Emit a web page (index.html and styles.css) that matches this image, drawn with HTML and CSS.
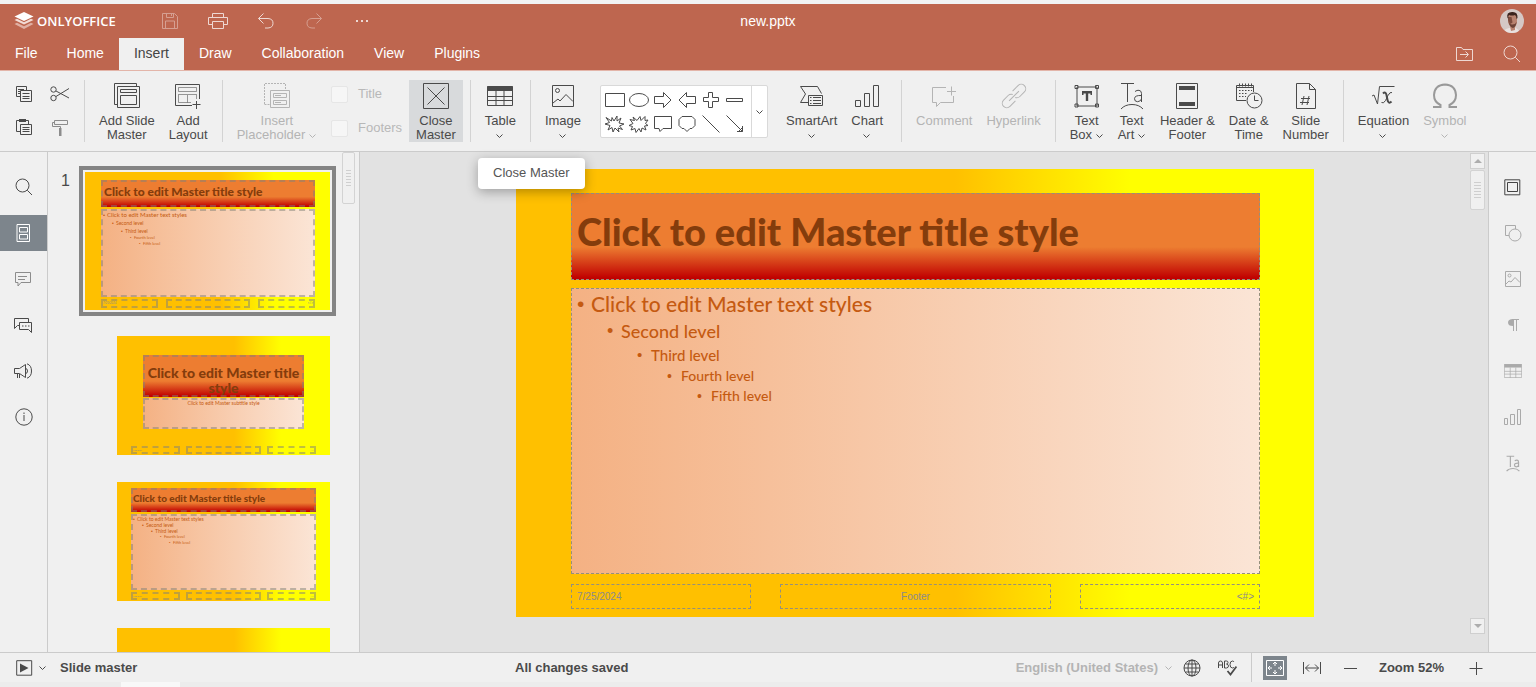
FILE: index.html
```html
<!DOCTYPE html>
<html lang="en">
<head>
<meta charset="utf-8">
<title>new.pptx - ONLYOFFICE</title>
<link rel="stylesheet" href="styles.css">
</head>
<body>
<svg class="sprite" aria-hidden="true">
  <symbol id="chev" viewBox="0 0 9 6"><path d="M1.5 1.5l3 3 3-3"/></symbol>
  <symbol id="search" viewBox="0 0 18 18"><circle cx="7.5" cy="7.5" r="6.5"/><path d="M12.3 12.3l4.7 4.7"/></symbol>
  <symbol id="picture" viewBox="0 0 24 24"><path d="M1.500 1.500h21v21h-21zM2 19l5-4 2 2 6-6.500 7 7"/><circle cx="6.500" cy="6.500" r="2"/></symbol>
  <symbol id="bars" viewBox="0 0 26 24"><path d="M1.500 16.500h5v6h-5zM10.500 9.500h5v13h-5zM19.500 1.500h5v21h-5z"/></symbol>
  <symbol id="grid" viewBox="0 0 26 20"><path d="M.5.500h25v19h-25zM.5 10.500h25M.5 14.500h25M9 5v15M17 5v15"/><path class="solid" d="M.5 0h25v5h-25z"/></symbol>
  <symbol id="textart" viewBox="0 0 24 28"><path d="M1 1.500h13M7.500 1.500V20M15 9.500q2-1.500 4-1.200 2.500.4 2.500 3.200V20M21.500 13.500q-7-.3-7 3.200 0 3 3 3 2.700 0 4-2.700M1 27q4-4.500 11-4.500T23 27"/></symbol>
</svg>

<header class="header">
  <div class="titlebar">
    <a class="logo" href="#">
      <svg width="20" height="18" viewBox="0 0 20 18"><path fill="#fff" d="M10 0l9.500 4.500L10 9 .5 4.500z"/><path fill="#f3dcd6" d="M.5 8l2.500-1.200L10 10.200l7-3.400L19.500 8 10 12.600z"/><path fill="#e0b0a4" d="M.5 12L3 10.800l7 3.400 7-3.400 2.500 1.200L10 17z"/></svg>
      <span>ONLYOFFICE</span>
    </a>
    <div class="quick">
      <button type="button" class="dim" aria-label="Save"><svg width="16" height="16"><path d="M.5.500h12l3 3v12H.500zM4.500.500v4h7v-4M3.500 15v-7h9v7M9.500 1v2"/></svg></button>
      <button type="button" aria-label="Print"><svg width="20" height="16"><path d="M4.500 4V.500h11V4M4 11.500H.500v-7h19v7H16M4.500 8.500h11v7h-11z"/></svg></button>
      <button type="button" aria-label="Undo"><svg width="16" height="16"><path d="M5.500.500l-5 5 5 5M.5 5.500h9.500q5 .3 5 4.700 0 4.500-5 4.800H7"/></svg></button>
      <button type="button" class="dim" aria-label="Redo"><svg width="16" height="16"><path d="M10.500.500l5 5-5 5M15.500 5.500H6q-5 .3-5 4.700Q1 14.700 6 15h3"/></svg></button>
      <button type="button" aria-label="More"><svg width="14" height="4"><path class="dots" d="M1 1h2v2H1zM6 1h2v2H6zM11 1h2v2h-2z"/></svg></button>
    </div>
    <span class="doc-name">new.pptx</span>
    <button type="button" class="avatar" aria-label="User">
      <svg width="24" height="24" viewBox="0 0 24 24"><defs><clipPath id="av"><circle cx="12" cy="12" r="12"/></clipPath></defs><g clip-path="url(#av)"><path fill="#d5c8c5" d="M0 0h24v24H0z"/><path fill="#e9e1df" d="M3 24q1-4 6-5l5-1q5 2 6 6z"/><path fill="#b98370" d="M8 8q0-4 4-4t5 4v6q-1 3-2 4v3l-4 1-1-5q-1.500-2-2-4z"/><path fill="#6b4236" d="M8.500 13q2 3 4 2.500 3 0 4-2.500-.5 5-3.500 6-3.500-1-4.500-6z"/><path fill="#7d4c3e" d="M8 8h3.500l1 5.500-2 1.500q-2.500-2-2.500-4z"/><path fill="#3b231d" d="M7.500 9Q6 3 12 3q6-.5 5.500 6l-1 1q0-3-1.500-4-3 1-6 0-1 1-.8 3.500z"/></g></svg>
    </button>
  </div>
  <nav class="tabs">
    <a href="#">File</a><a href="#">Home</a><a href="#" class="active">Insert</a><a href="#">Draw</a><a href="#">Collaboration</a><a href="#">View</a><a href="#">Plugins</a>
    <div class="tab-tools">
      <button type="button" aria-label="Open file location"><svg width="17" height="14"><path d="M.5.500h5l1.500 2h9.500v11H.500zM4 7.500h8M9.500 4.500l3 3-3 3"/></svg></button>
      <button type="button" aria-label="Find"><svg width="18" height="18"><use href="#search"/></svg></button>
    </div>
  </nav>
</header>

<div class="toolbar">
  <div class="clip">
    <button type="button" aria-label="Copy"><svg width="17" height="17"><path d="M4 10.500H.500V.500h10V4M2 3.500h6M2 5.500h2M2 7.500h2M4.500 4.500h11v11h-11zM6.500 7.500h7M6.500 10.500h7M6.500 12.500h7"/></svg></button>
    <button type="button" aria-label="Cut"><svg width="20" height="16"><circle cx="3.500" cy="3.500" r="2.700"/><circle cx="3.500" cy="12" r="2.700"/><path d="M6 5l13 7M6 10.500L19 2.500"/></svg></button>
    <button type="button" aria-label="Paste"><svg width="17" height="17"><path d="M4 12.500H.500v-11h12V5M4.500 5.500h11v10h-11zM6.500 8.500h7M6.500 10.500h7M6.500 12.500h7"/><path class="solid" d="M3 0h7v3H3z"/></svg></button>
    <button type="button" class="half" aria-label="Copy style"><svg width="16" height="17"><path d="M2.500 1.500h13v4h-13zM2.500 3.500h-2v4h8V10"/><path class="solid" d="M7 9h2.500v8H7z"/></svg></button>
  </div>
  <span class="sep"></span>
  <button type="button" class="tool"><span class="ico"><svg width="26" height="26"><path d="M3.500 21.500h-3V.500h22v3M3.500 3.500h22v21h-22zM6.500 6.500h16v3h-16zM6.500 12.500h16v9h-16z"/></svg></span><span>Add Slide<br>Master</span></button>
  <button type="button" class="tool"><span class="ico"><svg width="26" height="26"><path d="M17 22.500H.500v-21h24V16M21.500 18v8M17.500 21.500h8"/><path class="soft" d="M3.500 4.500h18v4h-18zM3 11.500h19M3.500 12v7.500H16M12.500 12v7.500M21.500 12v4"/></svg></span><span>Add<br>Layout</span></button>
  <span class="sep"></span>
  <button type="button" class="tool off" disabled><span class="ico"><svg width="26" height="26"><path stroke-dasharray="2 1" d="M.5 21V.500h21V6M.5 21.500H6"/><path d="M6.500 7.500h19v17h-19zM9.500 10.500h13v4h-13zM9.500 17.500h13v4h-13zM11 12.500h6M11 19.500h6"/></svg></span><span>Insert<br>Placeholder <svg class="chev"><use href="#chev"/></svg></span></button>
  <div class="checks">
    <label><input type="checkbox" disabled>Title</label>
    <label><input type="checkbox" disabled>Footers</label>
  </div>
  <div class="tip-host">
    <button type="button" class="tool pressed"><span class="ico"><svg width="26" height="26"><path d="M.5.500h25v25H.500zM4.500 4.500l17 17M21.500 4.500l-17 17"/></svg></span><span>Close<br>Master</span></button>
    <div class="tooltip" role="tooltip">Close Master</div>
  </div>
  <span class="sep"></span>
  <button type="button" class="tool"><span class="ico"><svg width="26" height="20"><use href="#grid"/></svg></span><span>Table<br><svg class="chev"><use href="#chev"/></svg></span></button>
  <span class="sep"></span>
  <button type="button" class="tool"><span class="ico"><svg width="24" height="24"><use href="#picture"/></svg></span><span>Image<br><svg class="chev"><use href="#chev"/></svg></span></button>
  <div class="gallery">
    <div class="shapes">
      <button type="button" aria-label="Rectangle"><svg width="20" height="16"><path d="M.5 1.500h19v13H.500z"/></svg></button>
      <button type="button" aria-label="Ellipse"><svg width="20" height="16"><ellipse cx="10" cy="8" rx="9.500" ry="6.500"/></svg></button>
      <button type="button" aria-label="Right arrow"><svg width="20" height="18"><path d="M1.500 5.500h9v-4L18 9l-7.500 7.500v-4h-9z"/></svg></button>
      <button type="button" aria-label="Left arrow"><svg width="20" height="18"><path d="M18.500 5.500h-9v-4L2 9l7.500 7.500v-4h9z"/></svg></button>
      <button type="button" aria-label="Plus"><svg width="18" height="18"><path d="M6.500 1.500h4v5h6v4h-6v6h-4v-6h-5v-4h5z"/></svg></button>
      <button type="button" aria-label="Minus"><svg width="18" height="6"><path d="M.5 1.500h16v3H.500z"/></svg></button>
      <button type="button" aria-label="Explosion 1"><svg width="20" height="18"><path d="M9 6l3-5v5l4-3-2 5 5 1-4.500 2 3 3.500-4.500-1.500 1 4-4-4-2 4-1-4.500-4 2.500 2-4.500-5-1.500 4.500-1.500L1 2.500 6.500 6 7 2.500z"/></svg></button>
      <button type="button" aria-label="Explosion 2"><svg width="20" height="18"><path d="M8 5.500l3-4 1 4 4-4v4l3-.5-2.500 3.500 2.500 2-3.500.5 1.500 4-4-2-1 4-2-3.500-3 4-1-4-4 1.500 1.500-3.500-3.500-1L4 8.500 1 4.500l4.500 1L4 2z"/></svg></button>
      <button type="button" aria-label="Rectangular callout"><svg width="18" height="18"><path d="M.5 1.500h17v12H9l-3 3-1-3H.500z"/></svg></button>
      <button type="button" aria-label="Rounded callout"><svg width="18" height="18"><path d="M4 1.500h10l3 3v6l-3 3h-2l-3 3-3-3H4l-3-3v-6z"/></svg></button>
      <button type="button" aria-label="Line"><svg width="18" height="18"><path d="M.5.500l17 17"/></svg></button>
      <button type="button" aria-label="Arrow"><svg width="18" height="18"><path d="M.5.500l16 16M11 16.500h5.500V11M13 16l3-3"/></svg></button>
    </div>
    <button type="button" class="more" aria-label="More shapes"><svg class="chev"><use href="#chev"/></svg></button>
  </div>
  <button type="button" class="tool"><span class="ico"><svg width="26" height="24"><path d="M9 18.500H1.500l5-8.500-5-7.500h17l4 7M9.500 11.500h14v10h-14zM14 13.500h8M14 16.500h8M14 19.500h8M11 13.500h1.500M11 16.500h1.500M11 19.500h1.500"/></svg></span><span>SmartArt<br><svg class="chev"><use href="#chev"/></svg></span></button>
  <button type="button" class="tool"><span class="ico"><svg width="26" height="24"><use href="#bars"/></svg></span><span>Chart<br><svg class="chev"><use href="#chev"/></svg></span></button>
  <span class="sep wide"></span>
  <button type="button" class="tool off" disabled><span class="ico"><svg width="26" height="24"><path d="M15 3.500H1.500v15h4v4l4-4h13V12M20.500 2.500v9M16 7.500h9"/></svg></span><span>Comment</span></button>
  <button type="button" class="tool off" disabled><span class="ico"><svg width="28" height="28"><g transform="rotate(-45 14 14)"><path d="M11.500 18.500H3.800a4.500 4.500 0 010-9h6.400a4.500 4.500 0 014 2.500M16.500 9.500h7.700a4.500 4.500 0 010 9h-6.400a4.500 4.500 0 01-4-2.500M7 14h14"/></g></svg></span><span>Hyperlink</span></button>
  <span class="sep"></span>
  <button type="button" class="tool"><span class="ico"><svg width="26" height="24"><path d="M3 3h20v19H3zM1 1.500h3v3H1zM21.500 1.500h3v3h-3zM1 20h3v3H1zM21.500 20h3v3h-3z"/><path class="solid" d="M8 7h10v4h-1.500V9.500h-2.300V17h-2.400V9.500H9.500V11H8z"/></svg></span><span>Text<br>Box <svg class="chev"><use href="#chev"/></svg></span></button>
  <button type="button" class="tool"><span class="ico"><svg width="24" height="28"><use href="#textart"/></svg></span><span>Text<br>Art <svg class="chev"><use href="#chev"/></svg></span></button>
  <button type="button" class="tool"><span class="ico"><svg width="22" height="28"><path d="M.5 1.500h21v25H.500z"/><path class="solid" d="M3 4h16v4H3zM3 20h16v4H3z"/></svg></span><span>Header &amp;<br>Footer</span></button>
  <button type="button" class="tool"><span class="ico"><svg width="28" height="26"><path d="M11 17.500H1.500v-15h17V9M1.500 4.500h17M4.500.500v3M7.500.500v3M10.500.500v3M13.500.500v3M16.500.500v3"/><path stroke-dasharray="1.500 1.500" d="M4 7.500h13M4 10.500h9M4 13.500h7"/><circle cx="19.500" cy="17.500" r="7.500"/><path d="M19.500 12.500v5h4"/></svg></span><span>Date &amp;<br>Time</span></button>
  <button type="button" class="tool"><span class="ico"><svg width="20" height="26"><path d="M.5.500h13l6 6v19H.500zM13.500.500v6h6M8 13l-2 9M13 13l-2 9M5 15.500h9M4 19.500h9"/></svg></span><span>Slide<br>Number</span></button>
  <span class="sep"></span>
  <button type="button" class="tool"><span class="ico"><svg width="24" height="20"><path d="M1 10l2-1 3.500 9L8.500.500h15"/><path stroke-width="2" d="M12 7.500q2.500-2.500 3.500 1.500l1 5q1 4.500 4 1.500"/><path d="M21 6.500q-2-1-4 3l-2.500 5q-2 3.500-4 2"/></svg></span><span>Equation<br><svg class="chev"><use href="#chev"/></svg></span></button>
  <button type="button" class="tool off symbol" disabled><span class="ico"><svg width="26" height="26"><path stroke-width="2" d="M1 24h7.500v-2Q2 19 2 12 2.500 2 13 1.500 23.500 2 24 12q0 7-6.500 10v2H25"/></svg></span><span>Symbol<br><svg class="chev"><use href="#chev"/></svg></span></button>
</div>

<main class="workspace">
  <nav class="rail">
    <button type="button" aria-label="Find"><svg width="18" height="18"><use href="#search"/></svg></button>
    <button type="button" class="on" aria-label="Slides"><svg width="15" height="18"><path d="M1 .5h12.500v17H1zM3.500 3.500h8v4.500h-8zM3.500 10.500h8v4.500h-8z"/></svg></button>
    <button type="button" class="half" aria-label="Comments"><svg width="17" height="16"><path d="M.5 1.500h15v10H6l-3 3.500v-3.500H.500zM3 5.500h9M3 8.500h7"/></svg></button>
    <button type="button" aria-label="Chat"><svg width="19" height="16"><path d="M5 8.500H3.500L.5 11.500V1.500h14V5M5.500 5.500h12v10l-3-3h-9zM8 9h1.500M11 9h1.500M14 9h1.500"/></svg></button>
    <button type="button" aria-label="Feedback"><svg width="19" height="16"><path d="M.5 5.500h5l6-4v13l-6-4h-5zM3.500 11v4M5.500 11v4M11.500 5.500q2 0 2 2.500t-2 2.500M13 .800q4.500 1.500 4.500 7.200T13 15.200"/></svg></button>
    <button type="button" aria-label="About"><svg width="18" height="18"><circle cx="9" cy="9" r="8.200"/><path d="M9 7v6M9 4.500V6"/></svg></button>
  </nav>

  <aside class="panel">
    <span class="num">1</span>
    <div class="thumbs">
      <div class="frame">
        <div class="slide thumb-master">
          <div class="ph title">Click to edit Master title style</div>
          <ul class="ph body"><li>Click to edit Master text styles</li><li>Second level</li><li>Third level</li><li>Fourth level</li><li>Fifth level</li></ul>
          <div class="feet"><span class="ph">7/25/2024</span><span class="ph"></span><span class="ph">&lt;#&gt;</span></div>
        </div>
      </div>
      <div class="slide thumb-layout cover">
        <div class="ph title">Click to edit Master title style</div>
        <div class="ph body">Click to edit Master subtitle style</div>
        <div class="feet"><span class="ph">7/25/2024</span><span class="ph"></span><span class="ph">&lt;#&gt;</span></div>
      </div>
      <div class="slide thumb-layout">
        <div class="ph title">Click to edit Master title style</div>
        <ul class="ph body"><li>Click to edit Master text styles</li><li>Second level</li><li>Third level</li><li>Fourth level</li><li>Fifth level</li></ul>
        <div class="feet"><span class="ph">7/25/2024</span><span class="ph"></span><span class="ph">&lt;#&gt;</span></div>
      </div>
      <div class="slide thumb-layout"></div>
    </div>
    <div class="grip"></div>
  </aside>

  <section class="canvas">
    <div class="stage">
      <div class="slide large">
        <div class="ph title">Click to edit Master title style</div>
        <ul class="ph body"><li>Click to edit Master text styles</li><li>Second level</li><li>Third level</li><li>Fourth level</li><li>Fifth level</li></ul>
        <div class="feet"><span class="ph">7/25/2024</span><span class="ph">Footer</span><span class="ph">&lt;#&gt;</span></div>
      </div>
    </div>
    <div class="scroll">
      <button type="button" aria-label="Scroll up"><svg width="8" height="4"><path d="M0 4l4-4 4 4z"/></svg></button>
      <div class="grip"></div>
      <button type="button" class="down" aria-label="Scroll down"><svg width="8" height="4"><path d="M0 0h8L4 4z"/></svg></button>
    </div>
  </section>

  <nav class="rail right">
    <button type="button" class="cur" aria-label="Slide settings"><svg width="17" height="17"><path d="M.8.800h15v15H.800zM3.500 3.500h10v9h-10z"/></svg></button>
    <button type="button" aria-label="Shape settings"><svg width="18" height="18"><path d="M5 11.500H1.500v-10h10V5"/><circle cx="11" cy="11" r="6"/></svg></button>
    <button type="button" aria-label="Image settings"><svg width="18" height="18"><path d="M1.500 1.500h15v15h-15zM2 14l3-3 2 1 4-4.500 5 5"/><circle cx="5.500" cy="5.500" r="1.500"/></svg></button>
    <button type="button" aria-label="Paragraph settings"><svg width="12" height="14"><path d="M5 1.500h7M6.500 1v12M9.500 1v12"/><path class="solid" d="M6 1v7Q1 8 1 4.500T6 1z"/></svg></button>
    <button type="button" aria-label="Table settings"><svg width="18" height="14"><use href="#grid"/></svg></button>
    <button type="button" aria-label="Chart settings"><svg width="19" height="18"><path d="M1.500 10.500h3v6h-3zM7.500 6.500h4v10h-4zM14.500 1.500h3v15h-3z"/></svg></button>
    <button type="button" aria-label="Text art settings"><svg width="14" height="17" class="strong"><use href="#textart"/></svg></button>
  </nav>
</main>

<footer class="status">
  <div class="left">
    <button type="button" aria-label="Start slideshow"><svg width="17" height="16"><path d="M.7.700h15v14.500h-15z"/><path class="solid" d="M4 3.500l8.500 4.500L4 12.500z"/></svg></button>
    <svg class="chev"><use href="#chev"/></svg>
    <span class="mode">Slide master</span>
  </div>
  <span class="saved">All changes saved</span>
  <div class="right-tools">
    <button type="button" class="lang" disabled>English (United States) <svg class="chev"><use href="#chev"/></svg></button>
    <button type="button" class="globe" aria-label="Document language"><svg width="18" height="18"><circle cx="9" cy="9" r="8"/><ellipse cx="9" cy="9" rx="4" ry="8"/><path d="M9 1v16M1 9h16M2.500 5h13M2.500 13h13"/></svg></button>
    <button type="button" aria-label="Spell checking"><svg width="19" height="16"><path d="M.5 8V3q0-2 2-2t2 2v5M.5 5h4M6.500 1v7h2q2-.3 2-2t-2-2q1.500 0 1.500-1.500T8.500 1zM16 2q-.5-1-1.500-1-2.500 0-2.500 3.500T14.500 8q1 0 1.500-1"/><path stroke-width="1.800" d="M9.500 11l3 3.500L18.500 6.500"/></svg></button>
    <span class="bar"></span>
    <button type="button" class="fit" aria-label="Fit to slide"><svg width="18" height="16"><path d="M.5.500h17v15H.500zM9 2v4M9 10v4M2 8h4M12 8h4M7 4l2-2 2 2M7 12l2 2 2-2M4 6L2 8l2 2M14 6l2 2-2 2"/></svg></button>
    <button type="button" aria-label="Fit to width"><svg width="18" height="12"><path d="M.5 0v12M17.500 0v12M2.500 6h13M6 2.500L2.500 6 6 9.500M12 2.500L15.500 6 12 9.500"/></svg></button>
    <button type="button" aria-label="Zoom out"><svg width="14" height="14"><path d="M1 7.500h13"/></svg></button>
    <span class="zoom">Zoom 52%</span>
    <button type="button" aria-label="Zoom in"><svg width="14" height="14"><path d="M.5 7.500h13M7.500 1v13"/></svg></button>
  </div>
</footer>
<div class="edge"><span></span></div>
</body>
</html>
```
FILE: styles.css
```css
* { box-sizing: border-box; }
body {
  margin: 0;
  height: 100vh;
  display: flex;
  flex-direction: column;
  overflow: hidden;
  border-top: 4px solid #f1f3f4;
  background: #f0f0f0;
  color: #4a4a4a;
  font: 13px/14px "Liberation Sans", Arial, sans-serif;
}
button {
  font: inherit;
  color: inherit;
  background: none;
  border: 0;
  padding: 0;
  display: flex;
  align-items: center;
  justify-content: center;
}
a { color: inherit; text-decoration: none; }
ul { list-style: none; margin: 0; padding: 0; }
svg { fill: none; stroke: currentColor; display: block; flex: none; }
.solid { fill: currentColor; stroke: none; }
.soft { opacity: .55; }
.half { opacity: .6; }
.sprite { width: 0; height: 0; position: absolute; }
.chev { width: 9px; height: 6px; display: inline-block; vertical-align: middle; }
.tool .chev { margin-left: -1px; }

/* header */
.header { background: #be664f; color: #fff; border-bottom: 1px solid #e3b5a9; }
.titlebar { position: relative; display: flex; align-items: center; height: 34px; padding: 0 12px 0 14px; }
.logo { display: flex; align-items: center; gap: 3px; width: 146px; font: 600 13px/18px "Open Sans", sans-serif; }
.logo svg { stroke: none; }
.quick { display: flex; opacity: .75; }
.quick button { width: 20px; height: 20px; margin-right: 28px; }
.quick .dim { opacity: .5; }
.dots { fill: currentColor; stroke: none; }
.doc-name { position: absolute; left: 0; right: 0; text-align: center; font-size: 14px; pointer-events: none; }
.avatar { margin-left: auto; }
.avatar svg { stroke: none; }
.tabs { display: flex; height: 32px; font-size: 14px; line-height: 31px; }
.tabs a { padding: 0 15px; }
.tabs a:first-child { padding-right: 14px; }
.tabs .active { background: #f0f0f0; color: #444; }
.tab-tools { margin-left: auto; display: flex; gap: 30px; padding-right: 15px; opacity: .75; }

/* toolbar */
.toolbar { display: flex; padding: 9px 0 9px 14px; height: 81px; border-bottom: 1px solid #cbcbcb; }
.toolbar > * { flex: none; }
.clip { display: grid; grid-template-columns: 20px 20px; grid-template-rows: 20px 20px; gap: 13px 16px; padding-top: 4px; margin-right: 7px; }
.sep { width: 1px; margin: 0 7px; background: #d3d3d3; }
.sep.wide { margin-left: 11px; }
.tool { display: flex; flex-direction: column; justify-content: flex-start; gap: 2px; height: 62px; padding: 0 7px; text-align: center; }
.ico { height: 32px; display: flex; align-items: center; justify-content: center; }
.off { color: #b4b4b4; }
.symbol .ico { color: #999; }
.pressed { background: #d8dadc; }
.checks { display: flex; flex-direction: column; gap: 16px; margin: 0 7px; padding-top: 5px; color: #b8b8b8; }
.checks label { display: flex; align-items: center; gap: 10px; height: 18px; }
.checks input { appearance: none; margin: 0; width: 17px; height: 17px; border: 1px solid #e6e6e6; border-radius: 2px; background: #f6f6f6; }
.tip-host { position: relative; }
.tooltip { position: absolute; z-index: 5; left: 69px; top: 78px; padding: 8px 15px 9px; background: #fff; border-radius: 4px; box-shadow: 0 3px 12px rgba(0,0,0,.3); white-space: nowrap; color: #555; }
.gallery { display: flex; height: 53px; margin: 5px 11px 0 12px; background: #fff; border: 1px solid #d9d9d9; border-radius: 2px; }
.shapes { display: grid; grid-template-columns: repeat(6, 24px); grid-template-rows: 24px 24px; padding: 2px 4px 0 2px; }
.more { width: 16px; border-left: 1px solid #d9d9d9; }

/* workspace */
.workspace { flex: 1; min-height: 0; display: flex; }
.rail { width: 48px; border-right: 1px solid #cbcbcb; padding-top: 17px; display: flex; flex-direction: column; gap: 10px; }
.rail button { height: 36px; flex: none; }
.rail .on { background: #7d858c; color: #fff; }
.right { border-right: 0; border-left: 1px solid #cbcbcb; color: #aaa; }
.right .cur { color: #444; }
.strong { stroke-width: 2; }
.panel { width: 312px; display: flex; align-items: flex-start; border-right: 1px solid #cbcbcb; overflow: hidden; }
.num { width: 31px; padding: 22px 9px 0 0; text-align: right; font-size: 16px; }
.thumbs { width: 257px; padding-top: 14px; display: flex; flex-direction: column; align-items: flex-end; }
.frame { border: 4px solid #848484; padding: 2px; }
.grip { width: 13px; height: 52px; margin: 0 0 0 6px; border: 1px solid #d3d3d3; border-radius: 2px; background: #f0f0f0 repeating-linear-gradient(#cfcfcf 0 1px, #f0f0f0 1px 3px) center / 5px 16px no-repeat content-box; }

/* slides */
.slide { display: flex; flex-direction: column; background: linear-gradient(90deg, #ffc000 55%, #ff0 77%); font-family: Lato, sans-serif; }
.ph { border: 2px dashed rgba(130, 130, 120, .5); }
.title { background: linear-gradient(#ed7d31 62%, #c00000 98%) border-box; color: #843c0c; font-weight: 900; display: flex; align-items: center; white-space: nowrap; }
.body { background: linear-gradient(90deg, #f4b183, #fbe5d6) border-box; color: #c55a11; }
.feet { display: grid; grid-template: 100% / 2fr 3fr 2fr; font-family: "Liberation Sans", Arial, sans-serif; line-height: 1; color: #8b8b8b; }
.feet span { display: flex; align-items: center; min-width: 0; }
.feet span:nth-child(2) { justify-content: center; }
.feet span:last-child { justify-content: flex-end; }
.body li { display: flex; }
.body li::before { content: "•"; font-family: "Liberation Sans", Arial, sans-serif; }

.large { width: 798px; height: 448px; padding: 24px 54px 8px 55px; }
.large .ph { border: 1px dashed #94907c; }
.large .title { height: 87px; padding: 0 5px 11px; font-size: 38px; line-height: 44px; }
.large .body { height: 286px; margin: 8px 0 10px; padding: 2px 0 0 5px; }
.large li { font-size: 21px; line-height: 26px; font-weight: 500; }
.large li::before { width: 14px; }
.large li:nth-child(2) { padding-left: 30px; font-size: 18px; line-height: 28px; }
.large li:nth-child(3) { padding-left: 60px; font-size: 15px; line-height: 20px; }
.large li:nth-child(4) { padding-left: 90px; font-size: 14px; line-height: 22px; }
.large li:nth-child(5) { padding-left: 120px; font-size: 14px; line-height: 18px; }
.large .feet { height: 25px; gap: 29px; font-size: 10px; }
.large .feet span { padding: 0 5px; }

.thumb-master { width: 245px; height: 138px; padding: 8px 15px 2px 16px; }
.thumb-master .title { height: 27px; padding: 0 1px 3px; font-size: 12px; }
.thumb-master .body { height: 88px; margin: 2px 0; font-size: 6px; line-height: 8px; }
.thumb-master .feet { height: 9px; gap: 8px; font-size: 3px; }
.thumb-layout { width: 213px; height: 119px; flex: none; margin: 0 6px 27px 0; padding: 6px 14px 1px 14px; }
.frame + .thumb-layout { margin-top: 20px; }
.thumb-layout .title { height: 24px; padding: 0 0 3px; font-size: 10px; }
.thumb-layout .body { height: 77px; margin: 2px 0; font-size: 5px; line-height: 6px; }
.thumb-layout .feet { height: 8px; gap: 6px; font-size: 2px; }
.thumb-master li::before, .thumb-layout li::before { width: 4px; }
.thumb-master li:nth-child(n+2), .thumb-layout li:nth-child(n+2) { font-size: 5px; }
.thumb-master li:nth-child(n+4), .thumb-layout li:nth-child(n+4) { font-size: 4px; line-height: 6px; }
.thumbs li:nth-child(2) { padding-left: 9px; }
.thumbs li:nth-child(3) { padding-left: 18px; }
.thumbs li:nth-child(4) { padding-left: 27px; }
.thumbs li:nth-child(5) { padding-left: 36px; }
.cover { padding-top: 19px; }
.cover .title { height: 42px; margin: 0 12px; padding: 8px 0 0; justify-content: center; text-align: center; white-space: normal; font-size: 14px; line-height: 15px; }
.cover .body { height: 31px; margin: 1px 12px 17px; padding: 0; text-align: center; }

.canvas { flex: 1; min-width: 0; display: flex; background: #e2e2e2; }
.stage { flex: 1; min-width: 0; display: flex; justify-content: center; align-items: flex-start; padding-top: 17px; }
.scroll { width: 18px; display: flex; flex-direction: column; gap: 1px; padding: 1px 3px 18px 0; }
.scroll button { height: 16px; border: 1px solid #cfcfcf; background: #f0f0f0; }
.scroll button svg { stroke: none; fill: #adadad; }
.scroll .grip { width: auto; height: 40px; margin: 0; background-size: 7px 16px; }
.scroll .down { margin-top: auto; }

/* status bar */
.status { position: relative; display: flex; align-items: center; justify-content: space-between; height: 30px; flex: none; border-top: 1px solid #cbcbcb; padding: 0 53px 0 16px; font-weight: bold; }
.left, .right-tools { display: flex; align-items: center; }
.left .chev { margin: 0 13px 0 5px; }
.saved { position: absolute; left: 515px; }
.right-tools { gap: 22px; height: 100%; }
.lang { color: #b4b4b4; margin-right: -12px; gap: 6px; }
.globe { margin-right: -5px; }
.bar { width: 1px; align-self: stretch; background: #cbcbcb; margin: 0 -11px 0 -8px; }
.fit { width: 24px; height: 24px; background: #7d858c; color: #fff; margin-right: -6px; }
.zoom { margin-right: 3px; }
.edge { height: 5px; flex: none; background: #ececec; padding-left: 121px; }
.edge span { display: block; width: 59px; height: 5px; background: #f8f8f8; }
```
